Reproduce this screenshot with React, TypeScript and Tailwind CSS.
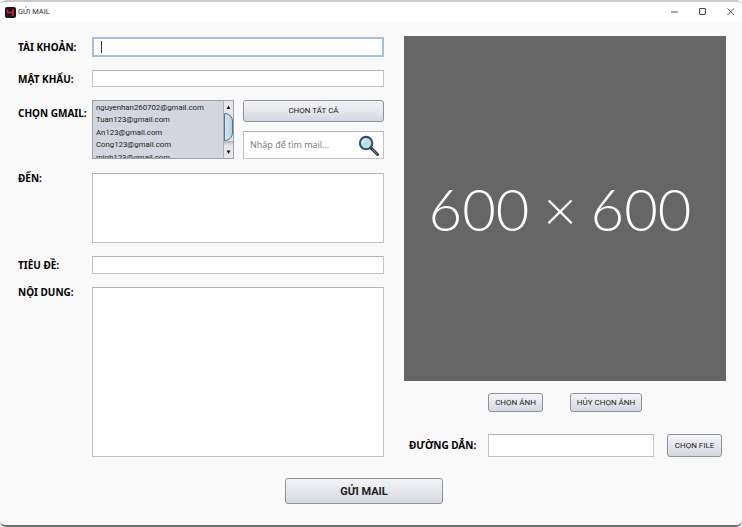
const labelFont = "font-['Noto_Sans'] font-bold text-[10px] text-black leading-none whitespace-nowrap";
const field = "bg-white border border-[#c4c4c8] border-t-[#b4b4b8]";
const btn =
  "flex items-center justify-center rounded-[3px] border border-[#8d9199] bg-gradient-to-b from-[#f4f5f8] to-[#d5d8e0] font-['Roboto'] text-[#222] leading-none whitespace-nowrap";

const mails = ["nguyenhan260702@gmail.com", "Tuan123@gmail.com", "An123@gmail.com", "Cong123@gmail.com", "minh123@gmail.com"];

function AppIcon() {
  return (
    <svg width="11" height="11" viewBox="0 0 11 11">
      <rect width="11" height="11" rx="2" fill="#1c1416" />
      <path d="M2.5 2.5v3h5M8 2v7" stroke="#e0202c" strokeWidth="1.6" fill="none" />
    </svg>
  );
}

function SearchIcon() {
  return (
    <svg width="21" height="21" viewBox="0 0 22 22">
      <path d="M13.5 13.5l7 7" stroke="#27343c" strokeWidth="3" strokeLinecap="round" />
      <path d="M15 15l5 5" stroke="#7d98a8" strokeWidth="1" strokeLinecap="round" />
      <circle cx="8.5" cy="8.5" r="6.5" fill="#b6e0ec" stroke="#3d4f57" strokeWidth="2.2" />
      <path d="M4.5 8a4 4 0 0 1 4-4" stroke="#eaf8fc" strokeWidth="1.2" fill="none" />
    </svg>
  );
}

function ListScrollbar() {
  return (
    <div className="flex w-[10px] flex-col items-center bg-[#e6e7ea] border-l border-[#aeb0b6]">
      <span className="h-[12px] text-[6px] leading-[12px] text-black">▲</span>
      <div className="h-[30px] w-full rounded-r-[8px] border border-[#4f7594] bg-gradient-to-r from-[#d8e7f3] to-[#b3d0e6]" />
      <div className="h-[5px] w-full bg-gradient-to-b from-[#b0b2b6] to-[#e6e7ea]" />
      <span className="mt-auto h-[12px] text-[6px] leading-[12px] text-black">▼</span>
    </div>
  );
}

export default function App() {
  return (
    <div className="flex h-[527px] w-[742px] flex-col overflow-hidden rounded-[6px] border-t-2 border-b-2 border-t-[#c9c9c9] border-b-[#707070] bg-[#f9f9f9]">
      <div className="flex h-[20px] shrink-0 items-center bg-white pl-[5px]">
        <AppIcon />
        <span className="ml-[2px] font-['Roboto'] text-[7.5px] text-[#333]">GỬI MAIL</span>
        <div className="ml-auto flex items-center gap-[18px] pr-[6px]">
          <svg width="10" height="10" viewBox="0 0 10 10"><path d="M1 5h7" stroke="#555" /></svg>
          <svg width="10" height="10" viewBox="0 0 10 10"><rect x="1.5" y="1.5" width="6" height="6" rx="0.5" stroke="#444" fill="none" /></svg>
          <svg width="10" height="10" viewBox="0 0 10 10"><path d="M1.5 1.5l6.5 6.5M8 1.5L1.5 8" stroke="#555" /></svg>
        </div>
      </div>

      <div className="flex flex-1 flex-col pl-[18px] pr-[16px] pt-[14px]">
        <div className="flex gap-[20px]">
          <div className="flex w-[366px] flex-col pt-[1px]">
            <div className="flex h-[20px] items-center">
              <span className={`w-[74px] ${labelFont}`}>TÀI KHOẢN:</span>
              <div className="flex h-[20px] flex-1 items-center border-2 border-[#a6c0da] bg-white pl-[7px]">
                <div className="h-[12px] w-px bg-[#333]" />
              </div>
            </div>
            <div className="mt-[13px] flex h-[17px] items-center">
              <span className={`w-[74px] ${labelFont}`}>MẬT KHẨU:</span>
              <div className={`h-[17px] flex-1 ${field}`} />
            </div>
            <div className="mt-[13px] flex h-[59px]">
              <span className={`mt-[8px] w-[74px] ${labelFont}`}>CHỌN GMAIL:</span>
              <div className="flex h-[59px] w-[142px] overflow-hidden border border-[#a0a2a8] bg-[#d3d6df]">
                <div className="flex-1 overflow-hidden pl-[3px] pt-[1px] font-['Roboto'] text-[7.8px] leading-[12.4px] text-[#222]">
                  {mails.map((m) => (
                    <div key={m}>{m}</div>
                  ))}
                </div>
                <ListScrollbar />
              </div>
              <div className="ml-[9px] flex flex-1 flex-col">
                <button className={`h-[22px] text-[8px] ${btn}`}>CHỌN TẤT CẢ</button>
                <div className={`mt-[9px] flex h-[28px] items-center pl-[6px] pr-[4px] ${field}`}>
                  <span className="font-['Open_Sans'] text-[9px] text-[#777]">Nhập để tìm mail...</span>
                  <div className="ml-auto">
                    <SearchIcon />
                  </div>
                </div>
              </div>
            </div>
            <div className="mt-[14px] flex h-[70px]">
              <span className={`w-[74px] ${labelFont}`}>ĐẾN:</span>
              <div className={`flex-1 ${field}`} />
            </div>
            <div className="mt-[13px] flex h-[18px] items-center">
              <span className={`w-[74px] ${labelFont}`}>TIÊU ĐỀ:</span>
              <div className={`h-[18px] flex-1 ${field}`} />
            </div>
            <div className="mt-[13px] flex h-[170px]">
              <span className={`w-[74px] ${labelFont}`}>NỘI DUNG:</span>
              <div className={`flex-1 ${field}`} />
            </div>
          </div>

          <div className="flex w-[322px] flex-col">
            <div className="flex h-[345px] items-center justify-center bg-[#666666] pr-[10px]">
              <span className="font-['Lato'] text-[58px] font-light text-white [word-spacing:-2px]">600 × 600</span>
            </div>
            <div className="mt-[12px] flex h-[19px] pl-[84px]">
              <button className={`w-[55px] text-[8px] ${btn}`}>CHỌN ẢNH</button>
              <button className={`ml-[27px] w-[72px] text-[8px] ${btn}`}>HỦY CHỌN ẢNH</button>
            </div>
            <div className="mt-[21px] flex h-[24px] items-center pl-[5px]">
              <span className={`w-[79px] ${labelFont}`}>ĐƯỜNG DẪN:</span>
              <div className={`h-[23px] w-[166px] ${field}`} />
              <button className={`ml-[13px] mt-[1px] h-[23px] w-[55px] text-[8px] ${btn}`}>CHỌN FILE</button>
            </div>
          </div>
        </div>

        <div className="mt-[21px] pl-[267px]">
          <button className={`h-[26px] w-[158px] pt-[1px] font-['Noto_Sans'] text-[11px] font-bold ${btn}`}>GỬI MAIL</button>
        </div>
      </div>
      <div className="mb-[-2px] h-[2px] w-[106px] shrink-0 bg-[#14245c]" />
    </div>
  );
}
